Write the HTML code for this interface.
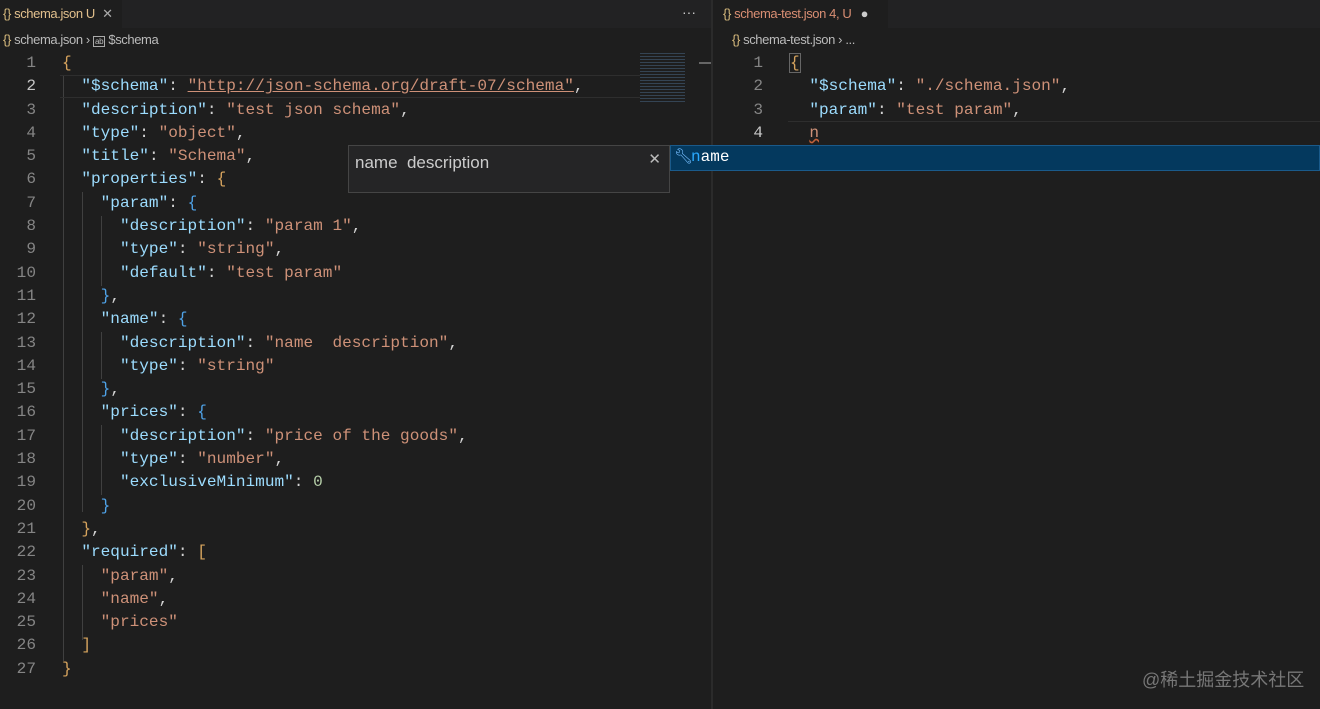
<!DOCTYPE html>
<html><head><meta charset="utf-8"><style>
*{margin:0;padding:0;box-sizing:border-box}
html,body{width:1320px;height:709px;overflow:hidden}
body{background:#1e1e1e;position:relative;font-family:"Liberation Sans",sans-serif;color:#ccc}
.tabbar{position:absolute;top:0;height:28px;background:#222223}
.tab{position:absolute;top:0;height:28px;background:#1e1e1e;font-size:13px;line-height:28px;letter-spacing:-0.4px;white-space:nowrap}
.crumb{position:absolute;top:32px;font-size:13px;color:#bbb;letter-spacing:-0.4px;white-space:nowrap}
.code{position:absolute;font-family:"Liberation Mono",monospace;font-size:16.1px}
.ln{position:absolute;font-family:"Liberation Mono",monospace;font-size:16.1px;color:#858585;text-align:right}
.k{color:#9cdcfe}.s{color:#ce9178}.n{color:#b5cea8}.o{color:#d7a45e}.b{color:#4fa3e8}.w{color:#d4d4d4}
.line{height:23.3px;line-height:23.3px;white-space:pre}
.guide{position:absolute;width:1px;background:#404040}
</style></head><body>
<div class="tabbar" style="left:0;width:712px"></div>
<div class="tabbar" style="left:713px;width:607px"></div>
<div class="tab" style="left:0;width:122px"><span style="color:#d7ba7d;margin-left:3px">{}</span> <span style="color:#e2c08d">schema.json U</span> <span style="color:#aaa;margin-left:4px">✕</span></div>
<div style="position:absolute;left:682px;top:4px;color:#ccc;font-size:14px">···</div>
<div class="tab" style="left:713px;width:175px"><span style="color:#d7ba7d;margin-left:10px">{}</span> <span style="color:#d98e73">schema-test.json 4, U</span> <span style="color:#ccc;margin-left:6px">●</span></div>
<div style="position:absolute;left:711px;top:0;width:2px;height:709px;background:#2b2b2b"></div>
<div class="crumb" style="left:3px"><span style="color:#d7ba7d">{}</span> schema.json › <span style="border:1px solid #aaa;font-size:8px;padding:0 1px">ab</span> $schema</div>
<div class="crumb" style="left:732px"><span style="color:#d7ba7d">{}</span> schema-test.json › ...</div>

<div class="ln" style="left:0;width:36px;top:52px">
<div class="line">1</div><div class="line" style="color:#c6c6c6">2</div><div class="line">3</div><div class="line">4</div><div class="line">5</div><div class="line">6</div><div class="line">7</div><div class="line">8</div><div class="line">9</div><div class="line">10</div><div class="line">11</div><div class="line">12</div><div class="line">13</div><div class="line">14</div><div class="line">15</div><div class="line">16</div><div class="line">17</div><div class="line">18</div><div class="line">19</div><div class="line">20</div><div class="line">21</div><div class="line">22</div><div class="line">23</div><div class="line">24</div><div class="line">25</div><div class="line">26</div><div class="line">27</div></div>
<div class="guide" style="left:63px;top:76px;height:585px"></div>
<div class="guide" style="left:82px;top:192px;height:320px"></div>
<div class="guide" style="left:82px;top:565px;height:75px"></div>
<div class="guide" style="left:101px;top:216px;height:70px"></div>
<div class="guide" style="left:101px;top:332px;height:47px"></div>
<div class="guide" style="left:101px;top:425px;height:70px"></div>
<div style="position:absolute;left:60px;top:75px;width:580px;height:23px;border-top:1px solid #2e2e2e;border-bottom:1px solid #2e2e2e"></div>
<div class="code w" style="left:62px;top:52px"><div class="line"><span class="o">{</span></div><div class="line">  <span class="k">"$schema"</span>: <span class="s" style="text-decoration:underline">"http://json-schema.org/draft-07/schema"</span>,</div><div class="line">  <span class="k">"description"</span>: <span class="s">"test json schema"</span>,</div><div class="line">  <span class="k">"type"</span>: <span class="s">"object"</span>,</div><div class="line">  <span class="k">"title"</span>: <span class="s">"Schema"</span>,</div><div class="line">  <span class="k">"properties"</span>: <span class="o">{</span></div><div class="line">    <span class="k">"param"</span>: <span class="b">{</span></div><div class="line">      <span class="k">"description"</span>: <span class="s">"param 1"</span>,</div><div class="line">      <span class="k">"type"</span>: <span class="s">"string"</span>,</div><div class="line">      <span class="k">"default"</span>: <span class="s">"test param"</span></div><div class="line">    <span class="b">}</span>,</div><div class="line">    <span class="k">"name"</span>: <span class="b">{</span></div><div class="line">      <span class="k">"description"</span>: <span class="s">"name  description"</span>,</div><div class="line">      <span class="k">"type"</span>: <span class="s">"string"</span></div><div class="line">    <span class="b">}</span>,</div><div class="line">    <span class="k">"prices"</span>: <span class="b">{</span></div><div class="line">      <span class="k">"description"</span>: <span class="s">"price of the goods"</span>,</div><div class="line">      <span class="k">"type"</span>: <span class="s">"number"</span>,</div><div class="line">      <span class="k">"exclusiveMinimum"</span>: <span class="n">0</span></div><div class="line">    <span class="b">}</span></div><div class="line">  <span class="o">}</span>,</div><div class="line">  <span class="k">"required"</span>: <span class="o">[</span></div><div class="line">    <span class="s">"param"</span>,</div><div class="line">    <span class="s">"name"</span>,</div><div class="line">    <span class="s">"prices"</span></div><div class="line">  <span class="o">]</span></div><div class="line"><span class="o">}</span></div></div>
<div style="position:absolute;left:640px;top:52px;width:45px;height:50px;opacity:.5;background:repeating-linear-gradient(#1e1e1e 0 1px,#4a6a8a 1px 2px,#1e1e1e 2px 3px)"></div>
<div style="position:absolute;left:699px;top:62px;width:12px;height:2px;background:#666"></div>

<div class="ln" style="left:713px;width:50px;top:52px">
<div class="line">1</div><div class="line">2</div><div class="line">3</div><div class="line" style="color:#c6c6c6">4</div></div>
<div style="position:absolute;left:788px;top:121px;width:532px;height:23px;border-top:1px solid #2e2e2e"></div>
<div class="code w" style="left:790px;top:52px"><div class="line"><span class="o" style="outline:1px solid #666">{</span></div><div class="line">  <span class="k">"$schema"</span>: <span class="s">"./schema.json"</span>,</div><div class="line">  <span class="k">"param"</span>: <span class="s">"test param"</span>,</div><div class="line">  <span class="s" style="text-decoration:underline wavy #c0603a">n</span></div></div>

<div style="position:absolute;left:348px;top:145px;width:322px;height:48px;background:#252526;border:1px solid #454545">
<div style="position:absolute;left:6px;top:7px;font-size:17px;color:#ccc;white-space:pre">name  description</div>
<div style="position:absolute;right:8px;top:4px;font-size:15px;color:#bbb">✕</div></div>
<div style="position:absolute;left:670px;top:145px;width:650px;height:26px;background:#04395e;border:1px solid #1a5a8a">
<div style="position:absolute;left:3px;top:1px;font-size:15px;color:#75beff">🔧&#xFE0E;</div>
<div class="code" style="left:20px;top:2px;color:#fff;font-size:16px"><span style="color:#2aaaff">n</span>ame</div></div>

<div style="position:absolute;left:1142px;top:666px;font-size:18px;color:#777;font-family:'Liberation Sans','Noto Sans CJK SC',sans-serif">@稀土掘金技术社区</div>
</body></html>
